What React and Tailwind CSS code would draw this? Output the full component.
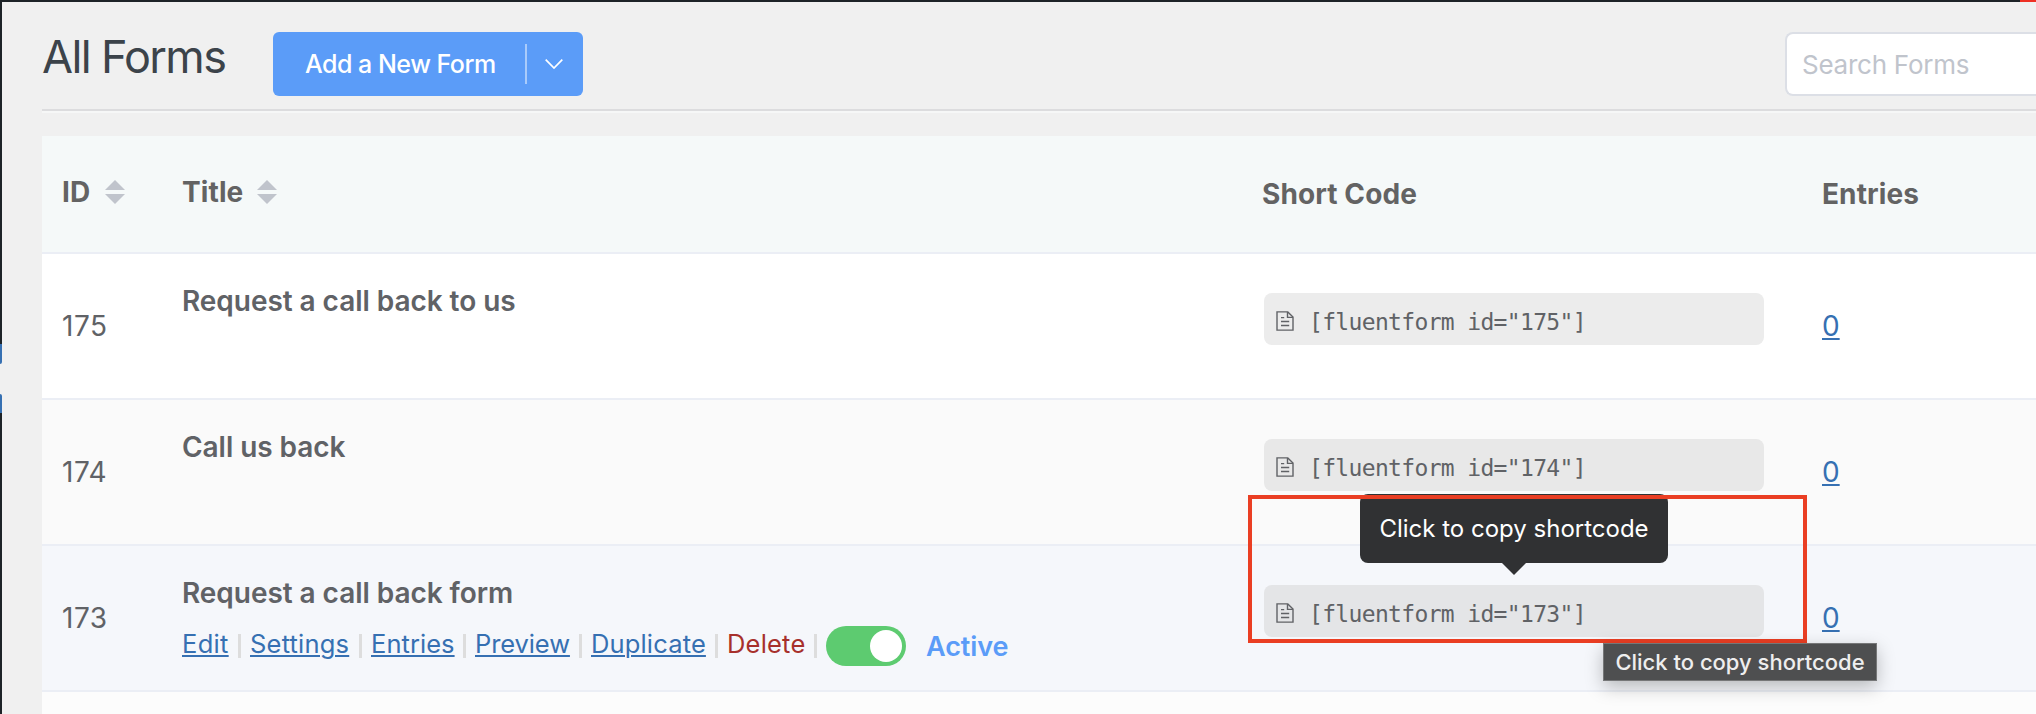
import React from "react";
import clsx from "clsx";

const forms = [
  { id: 175, title: "Request a call back to us", entries: 0 },
  { id: 174, title: "Call us back", entries: 0 },
  { id: 173, title: "Request a call back form", entries: 0, hovered: true },
];

const links = [
  { label: "Edit", width: "w-[47px]", spacing: "tracking-[0.3px]" },
  { label: "Settings", width: "w-[100px]", spacing: "tracking-[0.2px]" },
  { label: "Entries", width: "w-[83px]", spacing: "tracking-[0.05px]" },
  { label: "Preview", width: "w-[95px]", spacing: "tracking-[-0.1px]" },
  { label: "Duplicate", width: "w-[115px]", spacing: "tracking-[0.15px]" },
];

const columns = "grid grid-cols-[120px_1080px_560px_1fr]";

const SortCaret = () => (
  <svg width="20" height="24" viewBox="0 0 20 24" fill="#c0c4cc">
    <path d="M10 0l10 10H0z" />
    <path d="M0 14h20L10 24z" />
  </svg>
);

const DocumentIcon = () => (
  <svg
    className="shrink-0 mt-1"
    width="18"
    height="20"
    viewBox="0 0 18 20"
    fill="none"
    stroke="#606266"
    strokeWidth="1.4"
  >
    <path d="M1 .9h10.8L17 6v13.1H1z" />
    <path d="M11.5 1v5.4H17M5 6.6h3.2M5 10.5h8.2M5 14.5h8.2" />
  </svg>
);

const Separator = () => <span className="w-[3px] h-6 bg-[#dddddd]" />;

const RowActions = () => (
  <div className="flex items-center h-10 text-[25.5px] leading-8">
    {links.map((link) => (
      <React.Fragment key={link.label}>
        <a
          href="#"
          className={clsx(
            "mr-[9px] -mt-1 whitespace-nowrap text-[#3670b2] underline decoration-2 underline-offset-2",
            link.width,
            link.spacing
          )}
        >
          {link.label}
        </a>
        <Separator />
        <span className="w-[9px]" />
      </React.Fragment>
    ))}
    <a href="#" className="w-[78px] mr-[9px] -mt-1 text-[#a7302b] tracking-[0.2px]">
      Delete
    </a>
    <Separator />
    <button
      type="button"
      className="ml-[9px] flex justify-end items-center w-20 h-10 p-1 rounded-full bg-[#5dcb70]"
    >
      <span className="size-8 rounded-full bg-white" />
    </button>
    <span className="ml-5 mt-0.5 text-[27px] font-semibold tracking-[-0.1px] text-[#5b9cf8]">
      Active
    </span>
  </div>
);

const ShortCode = ({ id, hovered }) => (
  <div
    className={clsx(
      "relative flex items-center w-[500px] h-[52px] mt-[39px] ml-0.5 pl-3 rounded-lg",
      hovered ? "bg-[#e4e5e7]" : id === 174 ? "bg-[#e8e8e8]" : "bg-[#ececec]"
    )}
  >
    <DocumentIcon />
    <code className="ml-[15px] mt-1.5 font-['DejaVu_Sans_Mono',monospace] text-[23px] tracking-[-0.66px] text-[#606266]">
      {`[fluentform id="${id}"]`}
    </code>

    {hovered && (
      <>
        {/* Dark tooltip above the code */}
        <div className="absolute left-24 -top-[91px] w-[308px] h-[69px] rounded-lg bg-[#303133] text-white text-[24px] leading-[69px] text-center whitespace-nowrap">
          Click to copy shortcode
          <svg className="absolute left-[142px] top-[69px]" width="24" height="12" fill="#303133">
            <path d="M0 0h24L12 12z" />
          </svg>
        </div>
        {/* Highlight frame */}
        <div className="absolute -left-4 -top-[90px] w-[559px] h-[148px] border-4 border-[#ea3e23]" />
        {/* Browser title tooltip */}
        <div className="absolute left-[339px] top-[58px] w-[274px] h-[38px] border border-[#767778] bg-[#4e4f50] text-[#eeeeee] text-[22px] font-medium leading-[36px] text-center whitespace-nowrap shadow-[0_6px_18px_rgba(0,0,0,0.25)]">
          Click to copy shortcode
        </div>
      </>
    )}
  </div>
);

const FormRow = ({ form, striped }) => (
  <div
    className={clsx(
      columns,
      "h-[146px] border-b-2 border-[#ebeef5]",
      form.hovered ? "bg-[#f5f7fb]" : striped ? "bg-[#fafafa]" : "bg-white"
    )}
  >
    <div className="pl-5 pt-[52px] text-[28px] leading-10 tracking-[0.5px]">{form.id}</div>
    <div className="pl-5 pt-[27px]">
      <div className="text-[28px] leading-10 font-semibold tracking-[-0.05px]">{form.title}</div>
      {form.hovered && (
        <div className="mt-[13px]">
          <RowActions />
        </div>
      )}
    </div>
    <div className="pl-5">
      <ShortCode id={form.id} hovered={form.hovered} />
    </div>
    <div className="pl-5 pt-[52px] text-[28px] leading-10">
      <a href="#" className="text-[#3670b2] underline decoration-2 underline-offset-2">
        {form.entries}
      </a>
    </div>
  </div>
);

export default function App() {
  return (
    <div className="flex w-[2036px] h-[714px] overflow-hidden bg-[#f0f0f0] font-['Inter',sans-serif] text-[#606266]">
      {/* Edge of the admin menu */}
      <div className="flex flex-col w-0.5 shrink-0">
        <div className="h-[344px] bg-[#1d2327]" />
        <div className="h-5 bg-[#3670b2] rounded-br-xs" />
        <div className="h-[30px]" />
        <div className="h-[19px] bg-[#3670b2] rounded-tr-xs" />
        <div className="flex-1 bg-[#1d2327]" />
      </div>

      <div className="flex-1 min-w-0">
        <div className="flex justify-end h-0.5 bg-[#1d2327]">
          <div className="w-4 bg-[#ee3024]" />
        </div>

        <div className="ml-10">
          <header className="flex box-content h-[77px] pt-[30px] border-b-2 border-[#dcdcde]">
            <h1 className="w-[231px] -mt-[7px] text-[45px] leading-[64px] tracking-[-1.65px] text-[#3c434a] whitespace-nowrap">
              All Forms
            </h1>
            <button
              type="button"
              className="flex items-center w-[310px] h-16 rounded-md bg-[#5b9cf8] text-white"
            >
              <span className="w-[252px] pl-8 pt-0.5 text-left text-[25px] font-medium tracking-[-0.5px] whitespace-nowrap">
                Add a New Form
              </span>
              <span className="w-0.5 h-10 bg-[#a9cbfb]" />
              <svg className="ml-[18px]" width="18" height="10" fill="none" stroke="white" strokeWidth="1.7">
                <path d="M.7.7L9 9 17.3.7" />
              </svg>
            </button>
            <div className="flex-1" />
            <input
              type="text"
              placeholder="Search Forms"
              className="w-[251px] h-16 pl-[15px] rounded-l-lg border-2 border-r-0 border-[#dcdfe6] bg-white text-[26px] tracking-[-0.25px] placeholder:text-[#c0c4cc]"
            />
          </header>
          <div className="h-0.5 bg-[#f6f7f7]" />

          <div className="mt-[23px]">
            <div
              className={clsx(
                columns,
                "h-[118px] border-b-2 border-[#ebeef5] bg-[#f5f9f9] text-[28px] leading-10 font-bold tracking-[0.1px] text-[#636363]"
              )}
            >
              <div className="flex items-center h-[112px] pl-5 gap-[15px]">
                ID <SortCaret />
              </div>
              <div className="flex items-center h-[112px] pl-5 gap-3.5">
                Title <SortCaret />
              </div>
              <div className="pl-5 pt-[38px]">Short Code</div>
              <div className="pl-5 pt-[38px]">Entries</div>
            </div>
            {forms.map((form, i) => (
              <FormRow key={form.id} form={form} striped={i % 2 === 1} />
            ))}
            <div className="h-6 bg-[#fcfcfc]" />
          </div>
        </div>
      </div>
    </div>
  );
}
